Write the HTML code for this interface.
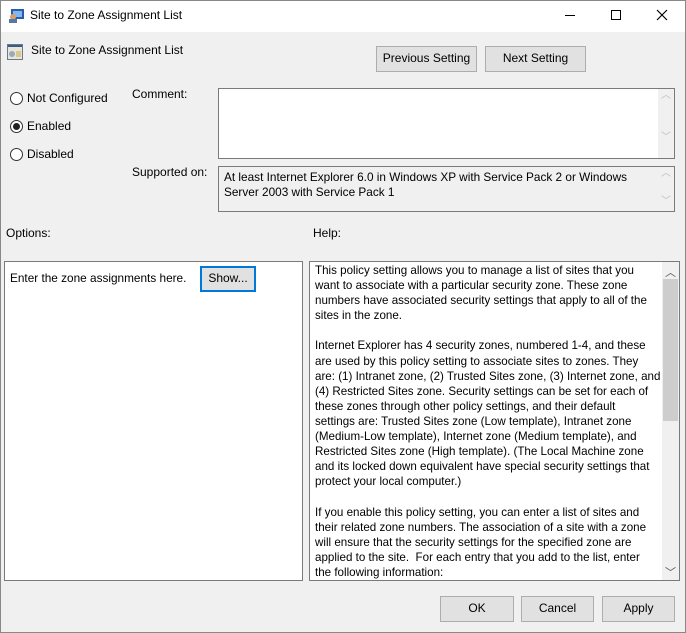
<!DOCTYPE html>
<html><head><style>
*{margin:0;padding:0;box-sizing:border-box}
body{width:686px;height:633px;background:#f0f0f0;font-family:"Liberation Sans",sans-serif;font-size:12px;color:#000;position:relative;overflow:hidden}
.a{position:absolute;white-space:nowrap}
.btn{position:absolute;background:#e1e1e1;border:1px solid #adadad;text-align:center;line-height:23px}
.rad{position:absolute;width:13px;height:13px;border:1px solid #333;border-radius:50%;background:#fff}
.box{position:absolute;border:1px solid #7a7a7a}
.sb{position:absolute;background:#f0f0f0;color:#bbb;font-size:10px;text-align:center}
</style></head><body>
<div class="a" style="left:0;top:0;width:686px;height:633px;border:1px solid #888"></div>
<div class="a" style="left:1px;top:1px;width:684px;height:31px;background:#fff"></div>
<svg class="a" style="left:8px;top:8px" width="18" height="16"><rect x="3" y="1" width="13" height="10" fill="#2a5caa"/><rect x="5" y="3" width="9" height="6" fill="#7fb8f0"/><circle cx="5" cy="9" r="3" fill="#d9a066"/><rect x="1" y="11" width="8" height="4" fill="#5577aa"/></svg>
<div class="a" style="left:30px;top:8px">Site to Zone Assignment List</div>
<div class="a" style="left:565px;top:15px;width:10px;height:1px;background:#000"></div>
<div class="a" style="left:611px;top:10px;width:10px;height:10px;border:1px solid #000"></div>
<svg class="a" style="left:656px;top:9px" width="12" height="12"><path d="M1 1L11 11M11 1L1 11" stroke="#000" stroke-width="1.2"/></svg>
<svg class="a" style="left:7px;top:44px" width="16" height="16"><rect x="0" y="0" width="16" height="16" fill="#6a7a8a"/><rect x="1" y="3" width="14" height="12" fill="#e8e4d8"/><rect x="1" y="1" width="14" height="2" fill="#3a5a8a"/><circle cx="5" cy="10" r="3" fill="#9ab"/><rect x="9" y="7" width="5" height="6" fill="#d8c890"/></svg>
<div class="a" style="left:31px;top:43px">Site to Zone Assignment List</div>
<div class="btn" style="left:376px;top:46px;width:101px;height:26px">Previous Setting</div>
<div class="btn" style="left:485px;top:46px;width:101px;height:26px">Next Setting</div>
<div class="rad" style="left:10px;top:92px"></div><div class="a" style="left:27px;top:91px">Not Configured</div>
<div class="rad" style="left:10px;top:120px"></div><div class="a" style="left:13px;top:123px;width:7px;height:7px;border-radius:50%;background:#222"></div><div class="a" style="left:27px;top:119px">Enabled</div>
<div class="rad" style="left:10px;top:148px"></div><div class="a" style="left:27px;top:147px">Disabled</div>
<div class="a" style="left:132px;top:87px">Comment:</div>
<div class="box" style="left:218px;top:88px;width:457px;height:71px;background:#fff"></div>
<div class="sb" style="left:658px;top:89px;width:16px;height:69px;line-height:14px">︿<br><br><br>﹀</div>
<div class="a" style="left:132px;top:165px">Supported on:</div>
<div class="box" style="left:218px;top:166px;width:457px;height:46px;background:#f0f0f0"></div>
<div class="a" style="left:224px;top:170px;line-height:15px;font-size:11.8px">At least Internet Explorer 6.0 in Windows XP with Service Pack 2 or Windows<br>Server 2003 with Service Pack 1</div>
<div class="sb" style="left:658px;top:167px;width:16px;height:44px;line-height:14px">︿<br><br>﹀</div>
<div class="a" style="left:6px;top:226px">Options:</div>
<div class="a" style="left:313px;top:226px">Help:</div>
<div class="box" style="left:4px;top:261px;width:299px;height:320px;background:#fff"></div>
<div class="a" style="left:10px;top:271px;font-size:11.8px">Enter the zone assignments here.</div>
<div class="btn" style="left:200px;top:266px;width:56px;height:26px;border:2px solid #0078d7;line-height:21px">Show...</div>
<div class="box" style="left:309px;top:261px;width:371px;height:320px;background:#fff"></div>
<div class="a" style="left:662px;top:262px;width:17px;height:318px;background:#f0f0f0"></div>
<div class="a" style="left:665px;top:264px;font-size:11px;color:#555">︿</div>
<div class="a" style="left:663px;top:279px;width:15px;height:142px;background:#cdcdcd"></div>
<div class="a" style="left:665px;top:564px;font-size:11px;color:#555">﹀</div>
<div class="a" style="left:310px;top:262px;width:352px;height:318px;overflow:hidden">
<div class="a" style="left:5px;top:1px;line-height:15.1px;font-size:11.6px">This policy setting allows you to manage a list of sites that you<br>want to associate with a particular security zone. These zone<br>numbers have associated security settings that apply to all of the<br>sites in the zone.<br><br>Internet Explorer has 4 security zones, numbered 1-4, and these<br>are used by this policy setting to associate sites to zones. They<br>are: (1) Intranet zone, (2) Trusted Sites zone, (3) Internet zone, and<br>(4) Restricted Sites zone. Security settings can be set for each of<br>these zones through other policy settings, and their default<br>settings are: Trusted Sites zone (Low template), Intranet zone<br>(Medium-Low template), Internet zone (Medium template), and<br>Restricted Sites zone (High template). (The Local Machine zone<br>and its locked down equivalent have special security settings that<br>protect your local computer.)<br><br>If you enable this policy setting, you can enter a list of sites and<br>their related zone numbers. The association of a site with a zone<br>will ensure that the security settings for the specified zone are<br>applied to the site.&nbsp; For each entry that you add to the list, enter<br>the following information:</div>
</div>
<div class="btn" style="left:440px;top:596px;width:74px;height:26px">OK</div>
<div class="btn" style="left:521px;top:596px;width:73px;height:26px">Cancel</div>
<div class="btn" style="left:602px;top:596px;width:73px;height:26px">Apply</div>
</body></html>
